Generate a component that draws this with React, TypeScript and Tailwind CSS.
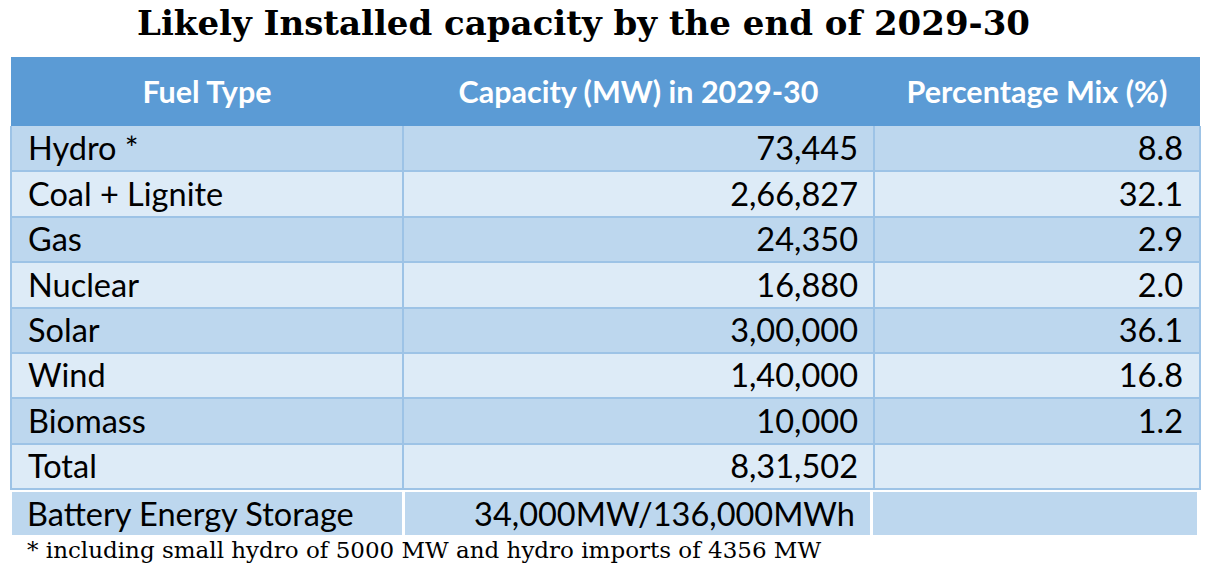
const rows = [
  { fuel: "Hydro *", cap: "73,445", pct: "8.8" },
  { fuel: "Coal + Lignite", cap: "2,66,827", pct: "32.1" },
  { fuel: "Gas", cap: "24,350", pct: "2.9" },
  { fuel: "Nuclear", cap: "16,880", pct: "2.0" },
  { fuel: "Solar", cap: "3,00,000", pct: "36.1" },
  { fuel: "Wind", cap: "1,40,000", pct: "16.8" },
  { fuel: "Biomass", cap: "10,000", pct: "1.2" },
  { fuel: "Total", cap: "8,31,502", pct: "" },
];

export default function App() {
  return (
    <div className="w-[1211px] h-[579px] bg-white overflow-hidden">
      {/* Title */}
      <h1
        className="h-[57px] pl-[137px] pt-[2px] text-[34px] font-bold text-black leading-[42px] whitespace-nowrap"
        style={{ fontFamily: '"DejaVu Serif", "Liberation Serif", serif' }}
      >
        Likely Installed capacity by the end of 2029-30
      </h1>

      <div className="pl-[10px]" style={{ fontFamily: 'Lato, "Open Sans", sans-serif' }}>
        <table className="border-collapse w-[1189px] table-fixed">
          <colgroup>
            <col className="w-[392px]" />
            <col className="w-[471px]" />
            <col className="w-[326px]" />
          </colgroup>
          <thead>
            <tr className="h-[69px] bg-[#5b9bd5] text-white text-[30.5px] font-bold">
              <th className="text-center font-bold">Fuel Type</th>
              <th className="text-center font-bold">Capacity (MW) in 2029-30</th>
              <th className="text-center font-bold">Percentage Mix (%)</th>
            </tr>
          </thead>
          <tbody className="text-[32.5px] text-black">
            {rows.map((r, i) => (
              <tr
                key={r.fuel}
                className={
                  "h-[45.4px] border-b-2 border-[#9dc3e6] " +
                  (i % 2 === 0 ? "bg-[#bdd7ee]" : "bg-[#ddebf7]")
                }
              >
                <td className="pl-[16px] leading-none border-l-2 border-[#9dc3e6] whitespace-nowrap">{r.fuel}</td>
                <td className="pr-[15px] text-right leading-none border-l-2 border-[#9dc3e6]">{r.cap}</td>
                <td className="pr-[16px] text-right leading-none border-l-2 border-r-2 border-[#9dc3e6]">{r.pct}</td>
              </tr>
            ))}
          </tbody>
        </table>

        {/* Battery row sits apart, after a thin white gap */}
        <div className="mt-[2px] ml-[2px] w-[1185px] h-[43px] flex bg-[#bdd7ee] text-[32.5px] text-black leading-[43px]">
          <div className="w-[390px] pl-[15px] whitespace-nowrap">Battery Energy Storage</div>
          <div className="w-[471px] pr-[15px] text-right border-l-[3px] border-r-[3px] border-white whitespace-nowrap">
            34,000MW/136,000MWh
          </div>
          <div className="flex-1" />
        </div>
      </div>

      <p
        className="pl-[27px] text-[23px] leading-[30px] text-black whitespace-nowrap"
        style={{ fontFamily: '"DejaVu Serif", "Liberation Serif", serif' }}
      >
        * including small hydro of 5000 MW and hydro imports of 4356 MW
      </p>
    </div>
  );
}
